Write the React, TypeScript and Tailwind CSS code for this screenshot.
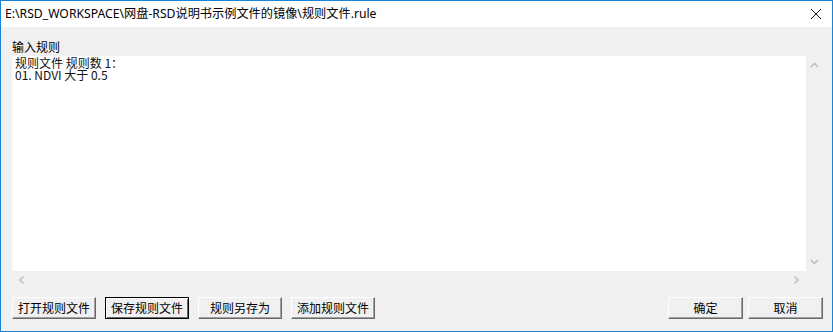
import React from 'react';

const font = { fontFamily: '"Noto Sans CJK SC", "Noto Sans", sans-serif' };

const Chevron: React.FC<{ dir: 'up' | 'down' | 'left' | 'right' }> = ({ dir }) => {
  const rot = { up: 0, down: 180, left: -90, right: 90 }[dir];
  return (
    <svg width="9" height="6" viewBox="0 0 9 6" style={{ transform: `rotate(${rot}deg)` }}>
      <path d="M1 5 L4.5 1.5 L8 5" fill="none" stroke="#bfbfbf" strokeWidth="1.6" />
    </svg>
  );
};

const WinButton: React.FC<{ label: string; focused?: boolean; width?: string }> = ({ label, focused, width = 'w-[84px]' }) => (
  <button
    className={`${width} h-[22px] flex items-center justify-center bg-[#f0f0f0] text-[12px] text-black leading-none ${
      focused
        ? 'border border-black shadow-[inset_1px_1px_0_#ffffff,inset_-1px_-1px_0_#696969]'
        : 'border border-t-white border-l-white border-b-[#696969] border-r-[#696969] shadow-[inset_-1px_-1px_0_#a0a0a0]'
    }`}
    style={font}
  >
    {label}
  </button>
);

export default function App() {
  return (
    <div className="w-[833px] h-[332px] border border-[#1883d7] flex flex-col bg-[#f0f0f0] overflow-hidden" style={font}>
      {/* Title bar */}
      <div className="h-[26px] bg-white flex items-center justify-between pl-[4px] pr-[10px] shrink-0">
        <span className="text-[12.2px] text-black" style={{ fontFamily: '"Noto Sans", "Noto Sans CJK SC", sans-serif' }}>
          E:\RSD_WORKSPACE\网盘-RSD说明书示例文件的镜像\规则文件.rule
        </span>
        <svg width="12" height="12" viewBox="0 0 12 12">
          <path d="M1 1 L11 11 M11 1 L1 11" stroke="#111" strokeWidth="1" />
        </svg>
      </div>

      {/* Body */}
      <div className="flex-1 flex flex-col pl-[11px] pr-[9px]">
        <div className="h-[29px] flex items-end pb-[3px] text-[12px] text-black leading-none">输入规则</div>

        {/* Edit box with scrollbars */}
        <div className="w-[811px] h-[232px] flex flex-col">
          <div className="flex h-[215px]">
            <div className="w-[794px] h-full bg-white pl-[3px] pt-[1px] text-[12px] leading-[12px] text-[#111]" style={font}>
              <div>规则文件 规则数 1：</div>
              <div>01. NDVI 大于 0.5</div>
            </div>
            <div className="w-[17px] h-full flex flex-col items-center justify-between py-[6px]">
              <Chevron dir="up" />
              <Chevron dir="down" />
            </div>
          </div>
          <div className="h-[17px] flex items-center justify-between pl-[5px] pr-[22px]">
            <Chevron dir="left" />
            <Chevron dir="right" />
          </div>
        </div>

        {/* Buttons */}
        <div className="flex items-center justify-between mt-[9px]">
          <div className="flex gap-[9px]">
            <WinButton label="打开规则文件" />
            <WinButton label="保存规则文件" focused />
            <WinButton label="规则另存为" />
            <WinButton label="添加规则文件" />
          </div>
          <div className="flex gap-[5px]">
            <WinButton label="确定" width="w-[75px]" />
            <WinButton label="取消" width="w-[75px]" />
          </div>
        </div>
      </div>
    </div>
  );
}
